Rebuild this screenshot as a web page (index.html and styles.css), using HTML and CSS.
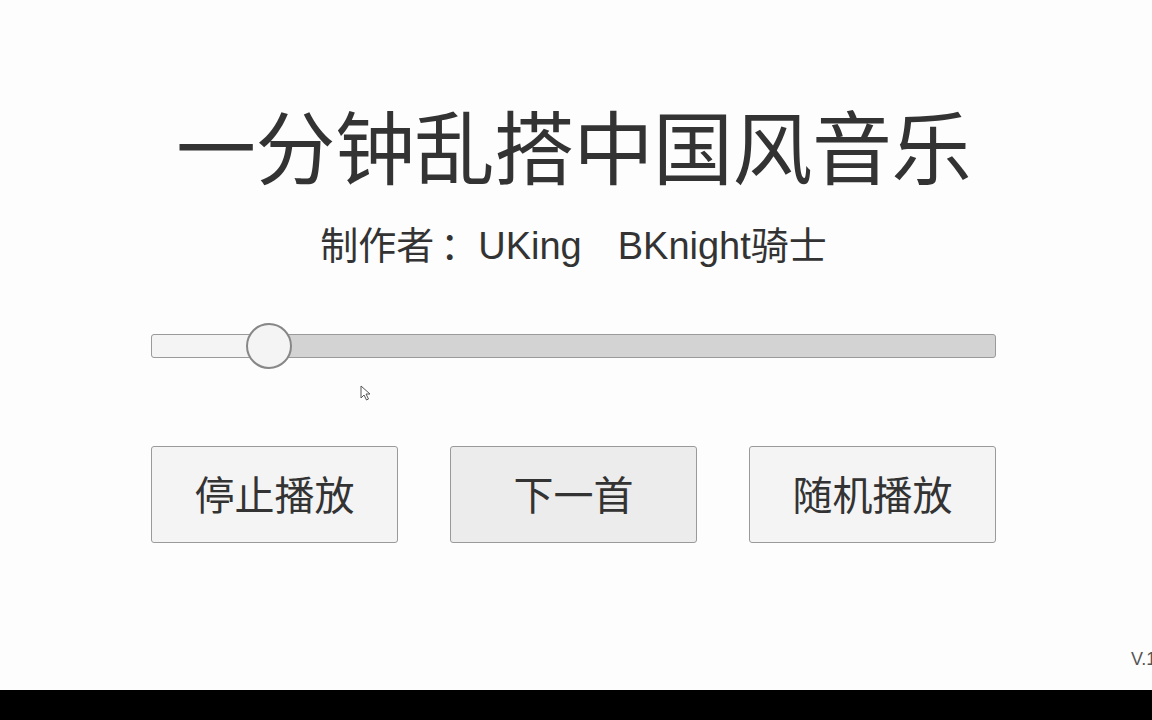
FILE: index.html
```html
<!DOCTYPE html>
<html lang="zh">
<head>
<meta charset="utf-8">
<title>一分钟乱搭中国风音乐</title>
<link rel="stylesheet" href="styles.css">
</head>
<body>
<div class="screen">
  <main class="panel">
    <h1 class="title">一分钟乱搭中国风音乐</h1>
    <p class="author">制作者<span class="colon">：</span>UKing<span class="gap"></span>BKnight骑士</p>
    <div class="slider">
      <div class="track">
        <div class="fill" style="width:116px"></div>
        <div class="thumb" style="left:94px"></div>
      </div>
    </div>
    <div class="buttons">
      <button class="btn">停止播放</button>
      <button class="btn btn-hover">下一首</button>
      <button class="btn">随机播放</button>
    </div>
  </main>
  <div class="version">V.1</div>
  <svg class="cursor" width="12" height="18" viewBox="0 0 12 18"><path d="M1 1 L1 13 L4 10 L6.5 15 L8.5 14 L6 9 L10 9 Z" fill="#fff" stroke="#555" stroke-width="1"/></svg>
</div>
<div class="letterbox"></div>
</body>
</html>
```
FILE: styles.css
```css
html, body {
  margin: 0;
  padding: 0;
}
body {
  width: 1152px;
  height: 720px;
  overflow: hidden;
  background: #fdfdfd;
  font-family: "Noto Sans CJK SC", "Liberation Sans", sans-serif;
  color: #333;
}
.screen {
  position: relative;
  height: 690px;
  overflow: hidden;
}
.panel {
  width: 845px;
  margin-left: 151px;
  padding-top: 95px;
  display: flex;
  flex-direction: column;
}
.title {
  margin: 0;
  font-size: 80px;
  line-height: 96px;
  font-weight: 400;
  text-align: center;
  color: #333;
  letter-spacing: -0.5px;
}
.author {
  margin: 27px 0 0;
  font-family: "Liberation Sans", "Noto Sans CJK SC", sans-serif;
  font-size: 38px;
  line-height: 50px;
  text-align: center;
  color: #333;
}
.colon {
  font-family: "Noto Sans CJK TC", "Noto Sans CJK SC", sans-serif;
  padding-left: 6px;
}
.gap {
  display: inline-block;
  width: 36px;
}
.slider {
  margin-top: 63px;
  height: 24px;
}
.track {
  position: relative;
  height: 22px;
  background: #d3d3d3;
  border: 1px solid #9a9a9a;
  border-radius: 3px;
}
.fill {
  height: 22px;
  background: #f4f4f4;
  border-radius: 3px 0 0 3px;
}
.thumb {
  position: absolute;
  top: -12px;
  width: 42px;
  height: 42px;
  border-radius: 50%;
  background: #f4f4f4;
  border: 2px solid #878787;
}
.buttons {
  margin-top: 88px;
  display: flex;
  gap: 52px;
}
.btn {
  width: 247px;
  height: 97px;
  background: #f4f4f4;
  border: 1px solid #9a9a9a;
  border-radius: 3px;
  font-family: "Noto Sans CJK SC", "Liberation Sans", sans-serif;
  font-size: 40px;
  color: #333;
  padding: 0 0 4px;
}
.btn-hover {
  background: #ececec;
}
.version {
  position: absolute;
  left: 1131px;
  top: 649px;
  font-family: "Liberation Sans", sans-serif;
  font-size: 18px;
  color: #555;
  white-space: nowrap;
}
.cursor {
  position: absolute;
  left: 360px;
  top: 385px;
}
.letterbox {
  height: 30px;
  background: #000;
}
```
